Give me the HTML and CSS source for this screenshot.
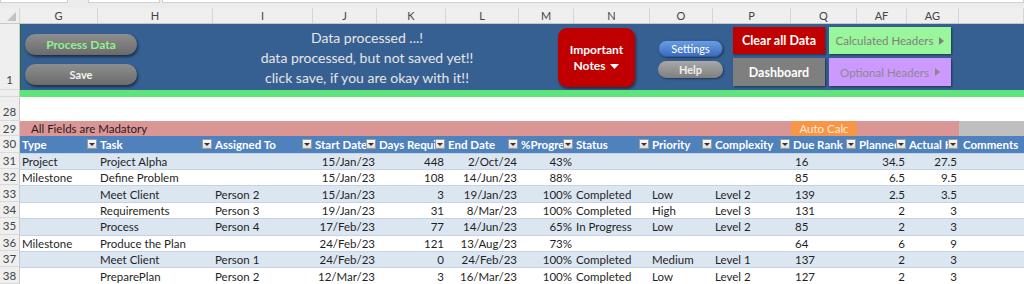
FILE: index.html
```html
<!DOCTYPE html>
<html>
<head>
<meta charset="utf-8">
<link rel="stylesheet" href="styles.css">
</head>
<body>
<div class="sheet">
  <div class="topbar"><div class="fbox b1"></div><div class="fbox b2"></div><div class="fbox b3"></div></div>
  <div class="g colhead">
    <div class="corner"><span class="tri"></span></div>
    <div>G</div><div>H</div><div>I</div><div>J</div><div>K</div><div>L</div><div>M</div><div>N</div><div>O</div><div>P</div><div>Q</div><div>AF</div><div>AG</div><div></div>
  </div>
  <div class="bannerrow">
    <div class="rh rh-bottom">1</div>
    <div class="banner">
      <div class="grp grp-left">
        <div class="pill process">Process Data</div>
        <div class="pill save">Save</div>
      </div>
      <div class="msg">
        <div>Data processed ...!</div>
        <div>data processed, but not saved yet!!</div>
        <div>click save, if you are okay with it!!</div>
      </div>
      <div class="notes">
        <span>Important</span>
        <span>Notes <svg class="caret" width="9" height="5" viewBox="0 0 9 5"><polygon points="0,0 9,0 4.5,5" fill="#fff"/></svg></span>
      </div>
      <div class="grp grp-small">
        <div class="mini settings">Settings</div>
        <div class="mini help">Help</div>
      </div>
      <div class="grp grp-rect">
        <div class="rect clear">Clear all Data</div>
        <div class="rect dash">Dashboard</div>
      </div>
      <div class="grp grp-rect grp-hdr">
        <div class="rect calc">Calculated Headers <svg class="arr" width="5" height="8" viewBox="0 0 5 8"><polygon points="0,0 5,4 0,8" fill="#7f7f7f"/></svg></div>
        <div class="rect opt">Optional Headers <svg class="arr" width="5" height="8" viewBox="0 0 5 8"><polygon points="0,0 5,4 0,8" fill="#8a8a8a"/></svg></div>
      </div>
    </div>
  </div>
  <div class="greenrow"><div class="rh"></div><div class="greenbar"></div></div>
  <div class="g row28"><div class="rh">28</div></div>
  <div class="g row29">
    <div class="rh">29</div>
    <div class="pink pink-a">All Fields are Madatory</div>
    <div class="auto">Auto Calc</div>
    <div class="pink pink-b"></div>
    <div class="greycell"></div>
  </div>
  <div class="g thead">
    <div class="rh">30</div>
    <div class="th"><span>Type</span><i class="dd"></i></div>
    <div class="th"><span>Task</span><i class="dd"></i></div>
    <div class="th"><span>Assigned To</span><i class="dd"></i></div>
    <div class="th"><span>Start Date</span><i class="dd"></i></div>
    <div class="th"><span>Days Required</span><i class="dd"></i></div>
    <div class="th"><span>End Date</span><i class="dd"></i></div>
    <div class="th"><span>%Progress</span><i class="dd"></i></div>
    <div class="th"><span>Status</span><i class="dd"></i></div>
    <div class="th"><span>Priority</span><i class="dd"></i></div>
    <div class="th"><span>Complexity</span><i class="dd"></i></div>
    <div class="th"><span>Due Rank</span><i class="dd"></i></div>
    <div class="th"><span>Planned Hours</span><i class="dd"></i></div>
    <div class="th"><span>Actual Hours</span><i class="dd"></i></div>
    <div class="th th-last"><span>Comments</span></div>
  </div>
  <div class="g tr band">
    <div class="rh">31</div><div>Project</div><div>Project Alpha</div><div></div><div class="r">15/Jan/23</div><div class="r">448</div><div class="r">2/Oct/24</div><div class="r">43%</div><div></div><div></div><div></div><div class="rk">16</div><div class="r">34.5</div><div class="r">27.5</div><div></div>
  </div>
  <div class="g tr">
    <div class="rh">32</div><div>Milestone</div><div>Define Problem</div><div></div><div class="r">15/Jan/23</div><div class="r">108</div><div class="r">14/Jun/23</div><div class="r">88%</div><div></div><div></div><div></div><div class="rk">85</div><div class="r">6.5</div><div class="r">9.5</div><div></div>
  </div>
  <div class="g tr band">
    <div class="rh">33</div><div></div><div>Meet Client</div><div>Person 2</div><div class="r">15/Jan/23</div><div class="r">3</div><div class="r">19/Jan/23</div><div class="r">100%</div><div>Completed</div><div>Low</div><div>Level 2</div><div class="rk">139</div><div class="r">2.5</div><div class="r">3.5</div><div></div>
  </div>
  <div class="g tr">
    <div class="rh">34</div><div></div><div>Requirements</div><div>Person 3</div><div class="r">19/Jan/23</div><div class="r">31</div><div class="r">8/Mar/23</div><div class="r">100%</div><div>Completed</div><div>High</div><div>Level 3</div><div class="rk">131</div><div class="r">2</div><div class="r">3</div><div></div>
  </div>
  <div class="g tr band">
    <div class="rh">35</div><div></div><div>Process</div><div>Person 4</div><div class="r">17/Feb/23</div><div class="r">77</div><div class="r">14/Jun/23</div><div class="r">65%</div><div>In Progress</div><div>Low</div><div>Level 2</div><div class="rk">85</div><div class="r">2</div><div class="r">3</div><div></div>
  </div>
  <div class="g tr">
    <div class="rh">36</div><div>Milestone</div><div>Produce the Plan</div><div></div><div class="r">24/Feb/23</div><div class="r">121</div><div class="r">13/Aug/23</div><div class="r">73%</div><div></div><div></div><div></div><div class="rk">64</div><div class="r">6</div><div class="r">9</div><div></div>
  </div>
  <div class="g tr band">
    <div class="rh">37</div><div></div><div>Meet Client</div><div>Person 1</div><div class="r">24/Feb/23</div><div class="r">0</div><div class="r">24/Feb/23</div><div class="r">100%</div><div>Completed</div><div>Medium</div><div>Level 1</div><div class="rk">137</div><div class="r">2</div><div class="r">3</div><div></div>
  </div>
  <div class="g tr">
    <div class="rh">38</div><div></div><div>PreparePlan</div><div>Person 2</div><div class="r">12/Mar/23</div><div class="r">3</div><div class="r">16/Mar/23</div><div class="r">100%</div><div>Completed</div><div>Low</div><div>Level 2</div><div class="rk">127</div><div class="r">2</div><div class="r">3</div><div></div>
  </div>
</div>
</body>
</html>
```
FILE: styles.css
```css
* { box-sizing: border-box; margin: 0; padding: 0; }
body {
  margin: 0;
  width: 1024px;
  height: 284px;
  overflow: hidden;
  background: #ffffff;
  font-family: Lato, "Liberation Sans", sans-serif;
  color: #1f1f1f;
}
.sheet { width: 1024px; }

.topbar {
  height: 8px;
  background: #ececec;
  display: flex;
  align-items: flex-start;
}
.fbox { height: 3px; background: #fff; border: 1px solid #cfcfcf; border-top: none; }
.b1 { width: 68px; }
.b2 { width: 72px; margin-left: 20px; }
.b3 { flex: 1; margin-left: 2px; }

.g {
  display: grid;
  grid-template-columns: 20px 78px 115px 100px 64px 69px 73px 55px 76px 63px 78px 66px 50px 52px 65px;
}

.colhead {
  height: 16px;
  background: #efefef;
  border-bottom: 1px solid #c8c8c8;
}
.colhead > div {
  font-size: 11px;
  color: #444;
  text-align: center;
  line-height: 15px;
  border-right: 1px solid #d6d6d6;
}
.corner { display: flex; justify-content: flex-end; align-items: flex-end; padding: 0 3px 2px 0; }
.tri {
  width: 0; height: 0;
  border-left: 9px solid transparent;
  border-bottom: 9px solid #c2c2c2;
}

.rh {
  background: #efefef;
  border-right: 1px solid #c8c8c8;
  border-bottom: 1px solid #dadada;
  font-size: 11.5px;
  color: #444;
  display: flex;
  align-items: center;
  justify-content: center;
}
.rh-bottom { align-items: flex-end; padding-bottom: 3px; }

.bannerrow { display: flex; height: 66px; }
.bannerrow .rh { width: 20px; flex: none; }
.banner {
  flex: 1;
  background: #366092;
  border-left: 1px solid #1e6b3c;
  display: flex;
  align-items: flex-start;
}
.grp { display: flex; flex-direction: column; }
.grp-left { margin-left: 4px; margin-top: 10px; width: 112px; gap: 9px; }
.pill {
  height: 21px;
  border-radius: 11px;
  background: linear-gradient(#8e8e8e, #6b6b6b);
  box-shadow: 1px 2px 3px rgba(0, 0, 0, 0.55);
  display: flex;
  align-items: center;
  justify-content: center;
  font-weight: bold;
}
.process { color: #8ff28f; font-size: 12px; }
.save { color: #f4f4f4; font-size: 11px; }

.msg {
  margin-left: 63px;
  margin-top: 4px;
  width: 334px;
  text-align: center;
  color: #e6e6e6;
  font-size: 14px;
  line-height: 20px;
}

.notes {
  margin-left: 24px;
  margin-top: 4px;
  width: 77px;
  height: 59px;
  background: #c00000;
  border-radius: 9px;
  box-shadow: 1px 2px 3px rgba(0, 0, 0, 0.5);
  color: #fff;
  font-weight: bold;
  font-size: 12px;
  line-height: 16px;
  display: flex;
  flex-direction: column;
  align-items: center;
  justify-content: center;
}
.caret { vertical-align: middle; margin-left: 2px; }

.grp-small { margin-left: 23px; margin-top: 16px; width: 65px; gap: 4px; }
.mini {
  height: 17px;
  border-radius: 9px;
  display: flex;
  align-items: center;
  justify-content: center;
  font-size: 11px;
  box-shadow: 1px 1px 2px rgba(0, 0, 0, 0.45);
}
.settings { background: linear-gradient(#6c9de2, #3a6cc0); color: #fff; border: 1px solid #2f5c9e; }
.help { background: linear-gradient(#a8a8a8, #7f7f7f); color: #efefef; font-weight: bold; }

.grp-rect { margin-left: 10px; margin-top: 3px; width: 92px; gap: 4px; }
.grp-hdr { margin-left: 4px; width: 122px; }
.rect {
  height: 27px;
  display: flex;
  align-items: center;
  justify-content: center;
  box-shadow: 1px 1px 2px rgba(0, 0, 0, 0.45);
}
.rect + .rect { height: 28px; }
.clear { background: #c00000; color: #fff; font-weight: bold; font-size: 12.5px; }
.dash { background: #7f7f7f; color: #fff; font-weight: bold; font-size: 12.5px; }
.calc { background: #9af69a; color: #7f7f7f; font-size: 11.5px; }
.opt { background: #cc99ff; color: #8a8a8a; font-size: 11.5px; }
.arr { margin-left: 6px; }

.greenrow { display: flex; height: 7px; }
.greenrow .rh { width: 20px; flex: none; }
.greenbar { flex: 1; background: #5de47b; }

.row28 { height: 24px; }
.row28 .rh { align-items: flex-end; padding-bottom: 2px; }

.row29 { height: 15px; font-size: 11.5px; }
.pink { background: #da9694; }
.pink-a { grid-column: 2 / 12; padding-left: 11px; line-height: 15px; color: #2a1a1a; }
.auto { grid-column: 12 / 13; background: #f79646; color: #fde9d9; text-align: center; line-height: 15px; }
.pink-b { grid-column: 13 / 15; }
.greycell { grid-column: 15 / 16; background: #bfbfbf; }

.thead { height: 16.5px; background: #4f81bd; }
.th {
  display: flex;
  align-items: center;
  color: #fff;
  font-weight: bold;
  font-size: 11.5px;
  padding-left: 2px;
  overflow: hidden;
}
.th span { flex: 1; min-width: 0; white-space: nowrap; overflow: hidden; }
.th-last { padding-left: 4px; }
.dd {
  flex: none;
  width: 10px;
  height: 10px;
  margin-right: 1px;
  background: linear-gradient(#fafafa, #dcdcdc);
  border: 1px solid #9a9a9a;
  display: flex;
  align-items: center;
  justify-content: center;
}
.dd::after {
  content: "";
  width: 0; height: 0;
  border-left: 3px solid transparent;
  border-right: 3px solid transparent;
  border-top: 3px solid #333;
}

.tr { height: 16.43px; font-size: 11.5px; }
.tr > div:not(.rh) {
  padding: 0 2px;
  white-space: nowrap;
  overflow: hidden;
  display: flex;
  align-items: center;
  border-top: 1px solid #c3d3e8;
}
.tr > div.r { justify-content: flex-end; }
.tr > div.rk { padding-left: 4px; }
.band > div:not(.rh) { background: #dce6f1; }
```
